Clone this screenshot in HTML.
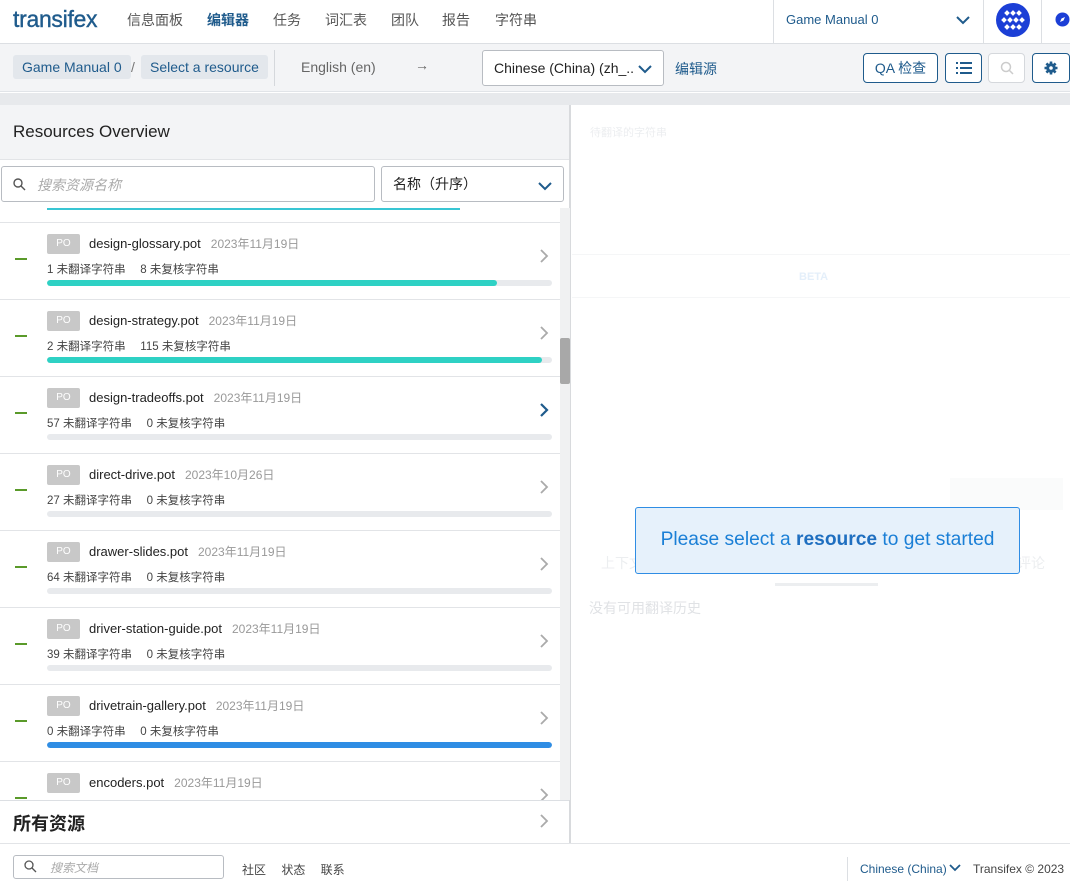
<!DOCTYPE html>
<html><head><meta charset="utf-8"><style>
*{box-sizing:border-box;margin:0;padding:0}
body{width:1070px;height:888px;overflow:hidden;font-family:"Liberation Sans","Noto Sans CJK SC",sans-serif;background:#fff;position:relative;color:#222}
.abs{position:absolute}
.nav{top:0;left:0;width:1070px;height:44px;border-bottom:1px solid #dcdfe3;background:#fff}
.nav .m{position:absolute;top:10px;font-size:14px;color:#555}
.bar2{top:44px;left:0;width:1070px;height:48px;background:#f3f4f6;border-bottom:1px solid #e1e4e8}
.crumb{position:absolute;top:11px;height:24px;background:#e3e7ec;border-radius:3px;color:#1f5b8c;font-size:14px;line-height:24px;padding:0 9px;white-space:nowrap}
.btn{position:absolute;top:9px;height:30px;border:1px solid #1f5b8c;border-radius:4px;background:#fff;color:#1f5b8c;font-size:14px;text-align:center;line-height:28px}
.row{position:absolute;left:0;width:560px;height:77px;border-bottom:1px solid #e2e4e7;background:#fff}
.po{position:absolute;left:47px;top:11px;width:33px;height:20px;background:#c8c8c8;color:#fff;font-size:10px;text-align:center;line-height:20px;border-radius:2px}
.fn{position:absolute;left:89px;top:12px;font-size:13px;color:#222}
.fn span{color:#999;font-size:12px;margin-left:10px}
.st{position:absolute;left:47px;top:38px;font-size:11.5px;color:#444}
.pb{position:absolute;left:47px;top:57px;width:505px;height:6px;background:#e8eaed;border-radius:3px;overflow:hidden}
.pb i{display:block;height:6px;border-radius:3px}
.dash{position:absolute;left:15px;top:35px;width:12px;height:2px;background:#5a9a2a}
.chev{position:absolute;left:538px;top:25px;width:12px;height:16px}
</style></head><body>
<div class="abs nav">
 <div class="abs" style="left:13px;top:6px;font-size:23px;color:#1f5b8c;letter-spacing:-0.3px;-webkit-text-stroke:0.4px #1f5b8c">transifex</div>
 <div class="m" style="left:127px">信息面板</div>
 <div class="m" style="left:207px;color:#1f5b8c;font-weight:bold">编辑器</div>
 <div class="m" style="left:273px">任务</div>
 <div class="m" style="left:325px">词汇表</div>
 <div class="m" style="left:391px">团队</div>
 <div class="m" style="left:442px">报告</div>
 <div class="m" style="left:495px">字符串</div>
 <div class="abs" style="left:773px;top:0;width:1px;height:44px;background:#dcdfe3"></div>
 <div class="m" style="left:786px;color:#1f5b8c;font-size:13px;top:12px">Game Manual 0</div>
 <svg class="abs" style="left:955px;top:15px" width="16" height="10"><path d="M2 2l6 6 6-6" stroke="#1f5b8c" stroke-width="2" fill="none"/></svg>
 <div class="abs" style="left:983px;top:0;width:1px;height:44px;background:#dcdfe3"></div>
 <svg class="abs" style="left:995px;top:2px" width="36" height="36"><circle cx="18" cy="18" r="17" fill="#1c3fd6"/><g fill="#fff"><rect x="10" y="9" width="4" height="4" transform="rotate(45 12 11)"/><rect x="16" y="9" width="4" height="4" transform="rotate(45 18 11)"/><rect x="22" y="9" width="4" height="4" transform="rotate(45 24 11)"/><rect x="7" y="16" width="4" height="4" transform="rotate(45 9 18)"/><rect x="13" y="16" width="4" height="4" transform="rotate(45 15 18)"/><rect x="19" y="16" width="4" height="4" transform="rotate(45 21 18)"/><rect x="25" y="16" width="4" height="4" transform="rotate(45 27 18)"/><rect x="10" y="23" width="4" height="4" transform="rotate(45 12 25)"/><rect x="16" y="23" width="4" height="4" transform="rotate(45 18 25)"/><rect x="22" y="23" width="4" height="4" transform="rotate(45 24 25)"/></g></svg>
 <div class="abs" style="left:1041px;top:0;width:1px;height:44px;background:#dcdfe3"></div>
 <svg class="abs" style="left:1055px;top:12px" width="15" height="15"><circle cx="7.5" cy="7.5" r="7" fill="#1c3fd6"/><path d="M10 5L6.5 6.5 5 10 8.5 8.5z" fill="#fff"/></svg>
</div>
<div class="abs bar2">
 <div class="crumb" style="left:13px">Game Manual 0</div>
 <div class="abs" style="left:131px;top:15px;font-size:14px;color:#777">/</div>
 <div class="crumb" style="left:141px">Select a resource</div>
 <div class="abs" style="left:274px;top:6px;width:1px;height:36px;background:#d5d8dc"></div>
 <div class="abs" style="left:301px;top:15px;font-size:14px;color:#666">English (en)</div>
 <div class="abs" style="left:415px;top:13px;font-size:14px;color:#666">→</div>
 <div class="abs" style="left:482px;top:6px;width:182px;height:36px;background:#fff;border:1px solid #b8bcc2;border-radius:3px;font-size:14px;line-height:34px;padding-left:11px;color:#222"><span style="display:inline-block;width:140px;overflow:hidden;white-space:nowrap">Chinese (China) (zh_...</span></div>
 <svg class="abs" style="left:637px;top:20px" width="16" height="10"><path d="M2 2l6 6 6-6" stroke="#1f5b8c" stroke-width="2" fill="none"/></svg>
 <div class="abs" style="left:675px;top:15px;font-size:14px;color:#1f5b8c">编辑源</div>
 <div class="btn" style="left:863px;width:75px">QA 检查</div>
 <div class="btn" style="left:945px;width:37px"><svg width="16" height="14" style="margin-top:7px"><g fill="#1f5b8c"><rect x="0" y="1" width="2" height="2"/><rect x="4" y="1" width="12" height="2"/><rect x="0" y="6" width="2" height="2"/><rect x="4" y="6" width="12" height="2"/><rect x="0" y="11" width="2" height="2"/><rect x="4" y="11" width="12" height="2"/></g></svg></div>
 <div class="btn" style="left:988px;width:37px;border-color:#d5d8dc"><svg width="14" height="14" style="margin-top:7px"><circle cx="6" cy="6" r="4.5" stroke="#ccc" stroke-width="1.5" fill="none"/><path d="M9.5 9.5l3.5 3.5" stroke="#ccc" stroke-width="1.5"/></svg></div>
 <div class="btn" style="left:1032px;width:38px"><svg width="14" height="14" style="margin-top:7px" viewBox="0 0 14 14"><circle cx="7" cy="7" r="4.8" fill="#1f5b8c"/><g stroke="#1f5b8c" stroke-width="2.6"><path d="M7 0.5v13M0.5 7h13M2.4 2.4l9.2 9.2M11.6 2.4l-9.2 9.2"/></g><circle cx="7" cy="7" r="1.8" fill="#fff"/></svg></div>
</div>
<div class="abs" style="top:93px;left:0;width:1070px;height:12px;background:#e7e9ec"></div>
<div class="abs" style="top:105px;left:0;width:571px;height:738px;background:#fff;border-right:2px solid #d8dadd"></div>
<div class="abs" style="top:105px;left:0;width:569px;height:55px;background:#f3f4f6;border-bottom:1px solid #e2e4e7"></div>
<div class="abs" style="left:13px;top:122px;font-size:17px;color:#222">Resources Overview</div>
<div class="abs" style="top:160px;left:0;width:569px;height:48px;background:#fff"></div>
<div class="abs" style="left:1px;top:166px;width:374px;height:36px;border:1px solid #b8bcc2;border-radius:3px"></div>
<svg class="abs" style="left:13px;top:178px" width="13" height="13"><circle cx="5" cy="5" r="4" stroke="#555" stroke-width="1.4" fill="none"/><path d="M8 8l4 4" stroke="#555" stroke-width="1.4"/></svg>
<div class="abs" style="left:37px;top:175px;font-size:14px;color:#aaa;font-style:italic">搜索资源名称</div>
<div class="abs" style="left:381px;top:166px;width:183px;height:36px;border:1px solid #b8bcc2;border-radius:3px;font-size:14px;line-height:34px;padding-left:11px;color:#222">名称（升序）</div>
<svg class="abs" style="left:537px;top:181px" width="16" height="10"><path d="M2 2l6 6 6-6" stroke="#1f5b8c" stroke-width="2" fill="none"/></svg>
<div class="abs" style="left:0;top:208px;width:560px;height:15px;background:#fff;border-bottom:1px solid #e2e4e7"><div style="position:absolute;left:47px;top:0;width:413px;height:2px;background:#38c6d4"></div></div>

<div class="row" style="top:223px"><div class="po">PO</div><div class="fn">design-glossary.pot<span>2023年11月19日</span></div><div class="dash"></div><div class="st">1 未翻译字符串　 8 未复核字符串</div><div class="pb"><i style="width:450px;background:#2ed1c4"></i></div><svg class="chev" viewBox="0 0 12 16"><path d="M3 2l6 6-6 6" stroke="#aaa" stroke-width="1.8" fill="none"/></svg></div>
<div class="row" style="top:300px"><div class="po">PO</div><div class="fn">design-strategy.pot<span>2023年11月19日</span></div><div class="dash"></div><div class="st">2 未翻译字符串　 115 未复核字符串</div><div class="pb"><i style="width:495px;background:#2ed1c4"></i></div><svg class="chev" viewBox="0 0 12 16"><path d="M3 2l6 6-6 6" stroke="#aaa" stroke-width="1.8" fill="none"/></svg></div>
<div class="row" style="top:377px"><div class="po">PO</div><div class="fn">design-tradeoffs.pot<span>2023年11月19日</span></div><div class="dash"></div><div class="st">57 未翻译字符串　 0 未复核字符串</div><div class="pb"></div><svg class="chev" viewBox="0 0 12 16"><path d="M3 2l6 6-6 6" stroke="#1f5b8c" stroke-width="2.2" fill="none"/></svg></div>
<div class="row" style="top:454px"><div class="po">PO</div><div class="fn">direct-drive.pot<span>2023年10月26日</span></div><div class="dash"></div><div class="st">27 未翻译字符串　 0 未复核字符串</div><div class="pb"></div><svg class="chev" viewBox="0 0 12 16"><path d="M3 2l6 6-6 6" stroke="#aaa" stroke-width="1.8" fill="none"/></svg></div>
<div class="row" style="top:531px"><div class="po">PO</div><div class="fn">drawer-slides.pot<span>2023年11月19日</span></div><div class="dash"></div><div class="st">64 未翻译字符串　 0 未复核字符串</div><div class="pb"></div><svg class="chev" viewBox="0 0 12 16"><path d="M3 2l6 6-6 6" stroke="#aaa" stroke-width="1.8" fill="none"/></svg></div>
<div class="row" style="top:608px"><div class="po">PO</div><div class="fn">driver-station-guide.pot<span>2023年11月19日</span></div><div class="dash"></div><div class="st">39 未翻译字符串　 0 未复核字符串</div><div class="pb"></div><svg class="chev" viewBox="0 0 12 16"><path d="M3 2l6 6-6 6" stroke="#aaa" stroke-width="1.8" fill="none"/></svg></div>
<div class="row" style="top:685px"><div class="po">PO</div><div class="fn">drivetrain-gallery.pot<span>2023年11月19日</span></div><div class="dash"></div><div class="st">0 未翻译字符串　 0 未复核字符串</div><div class="pb"><i style="width:505px;background:#2f8de4"></i></div><svg class="chev" viewBox="0 0 12 16"><path d="M3 2l6 6-6 6" stroke="#aaa" stroke-width="1.8" fill="none"/></svg></div>
<div class="row" style="top:762px"><div class="po">PO</div><div class="fn">encoders.pot<span>2023年11月19日</span></div><div class="dash"></div><svg class="chev" viewBox="0 0 12 16"><path d="M3 2l6 6-6 6" stroke="#aaa" stroke-width="1.8" fill="none"/></svg></div>
<div class="abs" style="left:560px;top:208px;width:10px;height:592px;background:#f0f1f2"></div>
<div class="abs" style="left:560px;top:338px;width:10px;height:46px;background:#a8a8a8;border-radius:2px"></div>
<div class="abs" style="left:0;top:800px;width:569px;height:43px;background:#fff;border-top:1px solid #dcdfe3"></div>
<div class="abs" style="left:13px;top:810px;font-size:18px;font-weight:bold;color:#222">所有资源</div>
<svg class="abs" style="left:538px;top:813px" width="12" height="16"><path d="M3 2l6 6-6 6" stroke="#aaa" stroke-width="1.8" fill="none"/></svg>
<div class="abs" style="left:590px;top:124px;font-size:11px;color:#eceef0">待翻译的字符串</div>
<div class="abs" style="left:572px;top:254px;width:498px;height:44px;border-top:1px solid #f5f6f7;border-bottom:1px solid #f5f6f7"></div>
<div class="abs" style="left:799px;top:271px;font-size:11px;color:#e4effa;font-weight:bold">BETA</div>
<div class="abs" style="left:950px;top:478px;width:113px;height:32px;background:#fafbfb"></div>
<div class="abs" style="left:601px;top:553px;font-size:14px;color:#eceef0;word-spacing:60px">上下文 建议 历史 术语</div>
<div class="abs" style="left:1017px;top:553px;font-size:14px;color:#eceef0">评论</div>
<div class="abs" style="left:775px;top:583px;width:103px;height:3px;background:#eceef0"></div>
<div class="abs" style="left:589px;top:598px;font-size:14px;color:#e0e2e5">没有可用翻译历史</div>
<div class="abs" style="left:635px;top:507px;width:385px;height:67px;background:#e6f1fb;border:1.5px solid #2f8de4;border-radius:3px;font-size:19.2px;color:#1a7fd6;text-align:center;line-height:64px;white-space:nowrap">Please select a <b style="color:#1f6fc0">resource</b> to get started</div>
<div class="abs" style="left:0;top:843px;width:1070px;height:45px;background:#fff;border-top:1px solid #e2e4e7"></div>
<div class="abs" style="left:13px;top:855px;width:211px;height:24px;border:1px solid #b8bcc2;border-radius:3px"></div>
<svg class="abs" style="left:24px;top:860px" width="13" height="13"><circle cx="5" cy="5" r="4" stroke="#555" stroke-width="1.3" fill="none"/><path d="M8 8l4 4" stroke="#555" stroke-width="1.3"/></svg>
<div class="abs" style="left:50px;top:859px;font-size:12px;color:#aaa;font-style:italic">搜索文档</div>
<div class="abs" style="left:242px;top:861px;font-size:12px;color:#444;word-spacing:12px">社区 状态 联系</div>
<div class="abs" style="left:847px;top:857px;width:1px;height:24px;background:#dcdfe3"></div>
<div class="abs" style="left:860px;top:862px;font-size:12px;color:#1f5b8c">Chinese (China)</div>
<svg class="abs" style="left:949px;top:864px" width="12" height="8"><path d="M1 1l5 5 5-5" stroke="#1f5b8c" stroke-width="1.8" fill="none"/></svg>
<div class="abs" style="left:973px;top:862px;font-size:12px;color:#444">Transifex © 2023</div>
</body></html>
